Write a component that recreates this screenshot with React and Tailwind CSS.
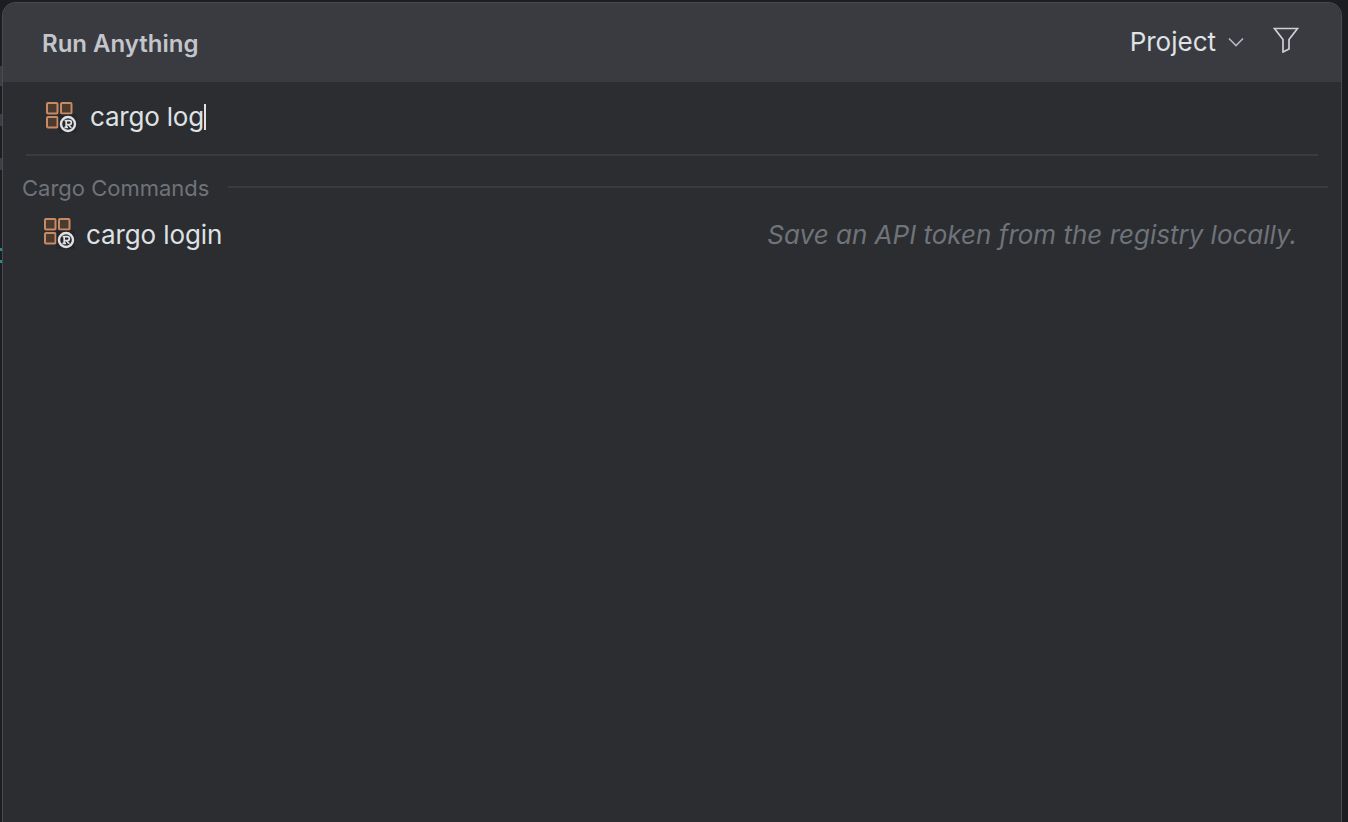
import React from "react";

function CargoIcon({ className = "" }) {
  return (
    <svg width="32" height="32" viewBox="0 0 32 32" fill="none" className={"shrink-0 " + className}>
      <rect x="2" y="2" width="10.5" height="10.5" rx="1" fill="#4a3a30" stroke="#c88a63" strokeWidth="2" />
      <rect x="16" y="2" width="10.5" height="10.5" rx="1" fill="#4a3a30" stroke="#c88a63" strokeWidth="2" />
      <rect x="2" y="16" width="10.5" height="10.5" rx="1" fill="#4a3a30" stroke="#c88a63" strokeWidth="2" />
      <rect x="13.5" y="13.5" width="18.5" height="18.5" rx="2" fill="#24262a" />
      <circle cx="23" cy="23" r="7" fill="none" stroke="#dfe1e5" strokeWidth="2.4" />
      <path d="M19.6 19.6h4.8a2 2 0 0 1 0 4h-3.2M21.2 19.6v6.8M19.4 26.4h3.6M23.6 23.6l1.2 1.8c.4.7.9 1 1.8 1" fill="none" stroke="#dfe1e5" strokeWidth="1.7" />
    </svg>
  );
}

export default function App() {
  return (
    <div className="relative w-[1348px] h-[822px] overflow-hidden bg-[#1c1d20] pt-[2px] pl-[2px] pr-[6px] font-['Inter',sans-serif]">
      <div className="absolute left-0 top-[66px] w-[2px] h-[20px] bg-[#3c3e43]" />
      <div className="absolute left-0 top-[114px] w-[2px] h-[12px] bg-[#3c3e43]" />
      <div className="absolute left-0 top-[158px] w-[2px] h-[12px] bg-[#3c3e43]" />
      <div className="absolute left-0 top-[248px] w-[2px] h-[3px] bg-[#2b8a8f]" />
      <div className="absolute left-0 top-[260px] w-[2px] h-[3px] bg-[#2b8a8f]" />
      <div className="flex flex-col h-[820px] rounded-tl-[14px] rounded-tr-[14px] border border-b-0 border-[#4a4b50] bg-[#2b2d30] overflow-hidden">
        <header className="flex items-center justify-between h-[79px] shrink-0 bg-[#393b40] pl-[39px] pr-[42px]">
          <h1 className="text-[24px] font-semibold text-[#c3c5ca] leading-none mt-[2px]">Run Anything</h1>
          <div className="flex items-center gap-[28px] -mt-[5px]">
            <button className="flex items-center gap-[11px] text-[26px] leading-none text-[#dfe1e5]">
              <span className="mt-[3px]">Project</span>
              <svg width="18" height="12" viewBox="0 0 18 12" fill="none" className="mt-[3px]">
                <path d="M2 2.5 9 9.5 16 2.5" stroke="#b4b8bf" strokeWidth="1.6" />
              </svg>
            </button>
            <svg width="26" height="26" viewBox="0 0 26 26" fill="none">
              <path d="M1.5 1.5h23L16 12.5v9.5l-6 3V12.5Z" stroke="#ced0d6" strokeWidth="1.7" strokeLinejoin="miter" />
            </svg>
          </div>
        </header>
        <div className="flex items-center h-[70px] mb-[2px] shrink-0 pl-[42px] gap-[13px]">
          <CargoIcon />
          <span className="text-[26px] leading-none text-[#dfe1e5] border-r-2 border-[#dfe1e5] -mr-[2px] tracking-[-0.2px]">cargo log</span>
        </div>
        <div className="h-[2px] shrink-0 ml-[23px] mr-[23px] bg-[#393b40]" />
        <div className="flex items-center h-[30px] mt-[17px] shrink-0 pl-[19px] pr-[13px] gap-[19px]">
          <span className="text-[22px] leading-none text-[#6f737a]">Cargo Commands</span>
          <div className="flex-1 h-[2px] -mt-[3px] bg-[#393b40]" />
        </div>
        <div className="flex items-center justify-between h-[48px] mt-[7px] shrink-0 pl-[40px] pr-[44px]">
          <div className="flex items-center gap-[11px]">
            <CargoIcon className="-mt-[2px]" />
            <span className="text-[26px] leading-none text-[#dfe1e5] mt-[2px] tracking-[-0.1px]">cargo login</span>
          </div>
          <span className="text-[26px] italic leading-none text-[#6f737a] mt-[2px]">Save an API token from the registry locally.</span>
        </div>
      </div>
    </div>
  );
}
